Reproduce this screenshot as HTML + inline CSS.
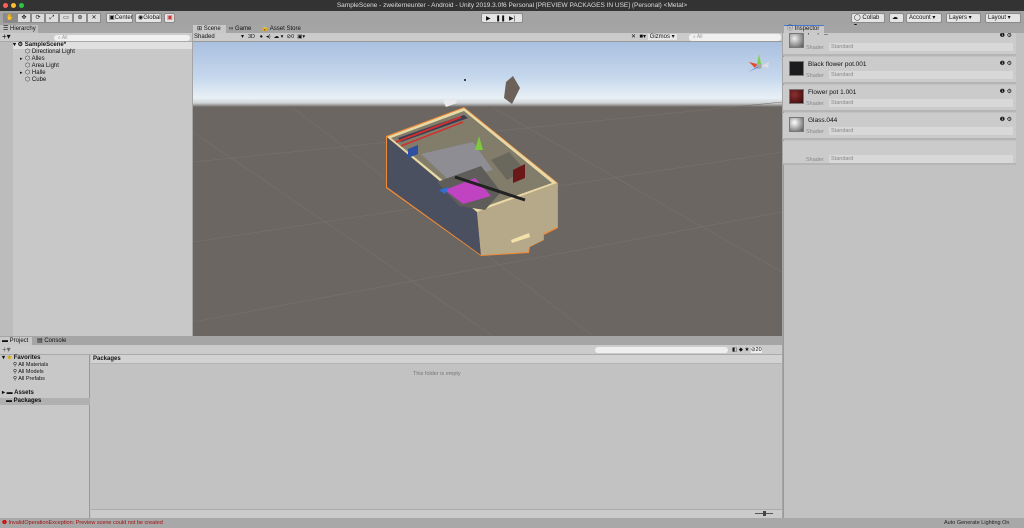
<!DOCTYPE html>
<html><head><style>
*{margin:0;padding:0;box-sizing:border-box}
body{width:1024px;height:528px;overflow:hidden;font-family:"Liberation Sans",sans-serif;font-size:6px;color:#111;background:#a5a5a5;position:relative}
.a{position:absolute}
.btn{position:absolute;background:#e4e4e4;border:1px solid #8a8a8a;border-radius:2px;height:10px;top:13px;font-size:6px;line-height:8px;padding:0 2px}
.tb{position:absolute;top:13px;height:10px;width:14px;background:#dcdcdc;border:1px solid #8a8a8a;font-size:6px;line-height:8px;text-align:center}
.tab{position:absolute;font-size:6px;line-height:8px}
.mat{position:absolute;left:783px;width:233px;height:27px;background:#cbcbcb;border-bottom:2px solid #b5b5b5}
.mat .th{position:absolute;left:6px;top:4px;width:15px;height:15px;border:1px solid #777}
.mat .nm{position:absolute;left:25px;top:4px;font-size:6.5px}
.mat .sh{position:absolute;left:23px;top:16px;color:#888;font-size:5.5px}
.mat .dd{position:absolute;left:46px;top:14px;width:184px;height:8px;background:#d8d8d8;color:#888;font-size:5.5px;padding-left:2px;line-height:8px}
.mat .ic{position:absolute;right:4px;top:3px;font-size:6px}
</style></head><body>
<div class="a" style="left:0;top:0;width:1024px;height:11px;background:#333;color:#ddd;font-size:6.5px;line-height:11px;text-align:center">SampleScene - zweiterneunter - Android - Unity 2019.3.0f6 Personal [PREVIEW PACKAGES IN USE] (Personal) &lt;Metal&gt;</div>
<div class="a" style="left:3px;top:3px;width:5px;height:5px;border-radius:50%;background:#fe5f57"></div>
<div class="a" style="left:11px;top:3px;width:5px;height:5px;border-radius:50%;background:#febc2e"></div>
<div class="a" style="left:19px;top:3px;width:5px;height:5px;border-radius:50%;background:#28c840"></div>
<div class="a" style="left:0;top:11px;width:1024px;height:14px;background:#a3a3a3"></div>
<div class="tb" style="left:3px;background:#8a8a8a">✋</div>
<div class="tb" style="left:17px">✥</div>
<div class="tb" style="left:31px">⟳</div>
<div class="tb" style="left:45px">⤢</div>
<div class="tb" style="left:59px">▭</div>
<div class="tb" style="left:73px">⊛</div>
<div class="tb" style="left:87px">✕</div>
<div class="btn" style="left:106px;width:27px">&#9635;Center</div>
<div class="btn" style="left:135px;width:27px">&#9673;Global</div>
<div class="btn" style="left:164px;width:11px;color:#c33">&#9635;</div>
<div class="btn" style="left:481px;width:42px"></div>
<div class="a" style="left:486px;top:15px;font-size:6px">&#9654;&nbsp;&nbsp;&nbsp;&#10074;&#10074;&nbsp;&nbsp;&#9654;|</div>
<div class="btn" style="left:851px;width:34px">&#9711; Collab ▾</div>
<div class="btn" style="left:889px;width:15px">☁</div>
<div class="btn" style="left:906px;width:36px">Account ▾</div>
<div class="btn" style="left:946px;width:35px">Layers ▾</div>
<div class="btn" style="left:985px;width:36px">Layout ▾</div>
<div class="a" style="left:0;top:25px;width:192px;height:311px;background:#c8c8c8"></div>
<div class="a" style="left:0;top:25px;width:192px;height:8px;background:#a5a5a5"></div>
<div class="a" style="left:0;top:25px;width:38px;height:8px;background:#c0c0c0"></div>
<div class="tab" style="left:3px;top:25px">☰ Hierarchy</div>
<div class="a" style="left:0;top:33px;width:192px;height:9px;background:#cbcbcb;border-bottom:1px solid #aaa"></div>
<div class="a" style="left:2px;top:33px;font-size:8px;line-height:8px">+▾</div>
<div class="a" style="left:54px;top:35px;width:136px;height:6px;background:#f0f0f0;border-radius:3px;color:#999;font-size:5px;padding-left:4px;line-height:6px">⌕ All</div>
<div class="a" style="left:0;top:42px;width:192px;height:7px;background:#e0e0e0"></div>
<div class="a" style="left:0;top:42px;width:13px;height:294px;background:#bcbcbc"></div>
<div class="a" style="left:13px;top:42px;line-height:7px;font-size:6px"><b>▾ ⚙ SampleScene*</b></div>
<div class="a" style="left:25px;top:49px;line-height:7px;font-size:6px">⬡ Directional Light<br>⬡ Alles<br>⬡ Area Light<br>⬡ Halle<br>⬡ Cube</div>
<div class="a" style="left:20px;top:56px;font-size:5px;line-height:7px">▸<br><br>▸</div>
<div class="a" style="left:193px;top:25px;width:589px;height:8px;background:#a5a5a5"></div>
<div class="a" style="left:193px;top:25px;width:33px;height:8px;background:#c8c8c8"></div>
<div class="tab" style="left:197px;top:25px">⊞ Scene</div>
<div class="tab" style="left:229px;top:25px">∞ Game</div>
<div class="tab" style="left:261px;top:25px">🔒 Asset Store</div>
<div class="a" style="left:193px;top:33px;width:589px;height:9px;background:#cbcbcb;border-bottom:1px solid #999"></div>
<div class="a" style="left:194px;top:33px;font-size:6px;line-height:9px;width:50px">Shaded<span style="float:right">▾</span></div>
<div class="a" style="left:248px;top:33px;font-size:5.5px;line-height:9px">3D &nbsp; &#9679; &nbsp;◂) &nbsp;☁ ▾ &nbsp;⊘0 &nbsp;▣▾</div>
<div class="a" style="left:631px;top:33px;font-size:6px;line-height:9px">✕ &nbsp;■▾ <span style="background:#e6e6e6;padding:0 2px">Gizmos ▾</span></div>
<div class="a" style="left:689px;top:34px;width:92px;height:7px;background:#f0f0f0;border-radius:3px;color:#999;font-size:5px;padding-left:4px;line-height:7px">⌕ All</div>
<div class="a" style="left:193px;top:42px;width:589px;height:294px;background:linear-gradient(#a9c0e0 0px,#c5d7ec 35px,#e8f0f6 56px,#d0d4d6 61px,#6b6661 65px,#6b6661 100%)"></div>
<svg class="a" style="left:193px;top:42px" width="589" height="294">
<g stroke="#77726d" stroke-width="0.6" fill="none"><path d="M0 120 L589 60 M0 200 L589 110 M0 280 L589 170 M100 66 L400 294 M300 66 L589 230 M0 90 L300 294"/></g>
<polygon points="320,34 327,46 319,62 311,56 313,40" fill="#6c6158"/>
<polygon points="250,59 261,55 264,61 253,65" fill="#e8e8ee"/>
<circle cx="272" cy="38" r="1" fill="#111"/>
<polygon points="193,94 271,65 365,141 365,186 351,193 351,198 337,205 336,211 288,214 193,146" fill="#f08a35"/>
<polygon points="194,95 284,170 288,213 194,145" fill="#4b5060"/>
<polygon points="284,170 364,141 364,185 350,192 350,198 336,205 335,210 288,213" fill="#b5a98a"/>
<polygon points="194,95 271,66 364,141 284,170" fill="#e6d9a8"/>
<polygon points="198,96 271,69 359,141 285,167" fill="#827c6a"/>
<polygon points="205,96 271,73 275,76 208,100" fill="#3c3c52"/>
<line x1="203" y1="100" x2="268" y2="75" stroke="#d03030" stroke-width="2"/>
<line x1="208" y1="104" x2="270" y2="80" stroke="#d03030" stroke-width="1.5"/>
<polygon points="228,112 280,100 300,128 258,140" fill="#8d8d93"/>
<polygon points="244,140 288,124 308,150 292,168 266,164" fill="#5f5d5a"/>
<polygon points="252,148 282,136 298,154 270,162" fill="#c043c2"/>
<line x1="262" y1="135" x2="332" y2="158" stroke="#222" stroke-width="3"/>
<polygon points="298,118 316,110 332,128 314,138" fill="#6a675d"/>
<polygon points="282,108 286,94 290,108" fill="#7ec83f"/>
<polygon points="320,128 332,122 332,136 320,141" fill="#6a1818"/>
<polygon points="246,148 256,145 252,152" fill="#2f6ed8"/>
<polygon points="215,107 225,103 225,112 215,116" fill="#2f4fa0"/>
<polygon points="318,198 336,191 337,195 319,201" fill="#f3e2a8"/>
</svg>
<svg class="a" style="left:745px;top:52px" width="28" height="26">
<circle cx="14" cy="14" r="3" fill="#aaa"/><polygon points="12,12 16,12 14,2" fill="#7bd045"/><polygon points="12,12 10,16 4,10" fill="#e64a2e"/><polygon points="12,16 14,14 3,20" fill="#3a6de8"/><polygon points="16,14 24,10 23,16" fill="#ddd"/></svg>
<div class="a" style="left:783px;top:25px;width:241px;height:493px;background:#c2c2c2;border-left:1px solid #999"></div>
<div class="mat" style="top:29px"><div class="th" style="background:radial-gradient(circle at 35% 35%,#eee,#555)"></div><div class="nm" style="top:-1px">props_hall.002</div><div class="sh">Shader</div><div class="dd">Standard</div><div class="ic">❶ ⚙</div></div>
<div class="a" style="left:783px;top:25px;width:241px;height:8px;background:#a5a5a5"></div>
<div class="a" style="left:784px;top:25px;width:40px;height:8px;background:#c8c8c8;border-top:1px solid #4a7ad0"></div>
<div class="tab" style="left:787px;top:25px">ⓘ Inspector</div>
<div class="mat" style="top:57px"><div class="th" style="background:#1c1c1e"></div><div class="nm">Black flower pot.001</div><div class="sh">Shader</div><div class="dd">Standard</div><div class="ic">❶ ⚙</div></div>
<div class="mat" style="top:85px"><div class="th" style="background:radial-gradient(circle at 35% 35%,#8a3030,#3a0a0a)"></div><div class="nm">Flower pot 1.001</div><div class="sh">Shader</div><div class="dd">Standard</div><div class="ic">❶ ⚙</div></div>
<div class="mat" style="top:113px"><div class="th" style="background:radial-gradient(circle at 35% 35%,#fff,#555)"></div><div class="nm">Glass.044</div><div class="sh">Shader</div><div class="dd">Standard</div><div class="ic">❶ ⚙</div></div>
<div class="mat" style="top:141px;height:24px"><div class="sh">Shader</div><div class="dd">Standard</div></div>
<div class="a" style="left:0;top:337px;width:782px;height:181px;background:#c2c2c2"></div>
<div class="a" style="left:0;top:337px;width:782px;height:8px;background:#a5a5a5"></div>
<div class="a" style="left:0;top:337px;width:32px;height:8px;background:#c8c8c8"></div>
<div class="tab" style="left:2px;top:337px">▬ Project</div>
<div class="tab" style="left:37px;top:337px">▤ Console</div>
<div class="a" style="left:0;top:345px;width:782px;height:10px;background:#cbcbcb;border-bottom:1px solid #aaa"></div>
<div class="a" style="left:2px;top:345px;font-size:8px;line-height:9px;color:#666">+▾</div>
<div class="a" style="left:595px;top:347px;width:133px;height:6px;background:#eee;border-radius:3px"></div>
<div class="a" style="left:732px;top:345px;font-size:5.5px;line-height:10px">◧ ◆ ★ <span style="background:#eee">⊘20</span></div>
<div class="a" style="left:0;top:355px;width:90px;height:163px;background:#c8c8c8;border-right:1px solid #999"></div>
<div class="a" style="left:2px;top:355px;font-size:6px;line-height:7px"><b>▾ <span style="color:#d9a400">★</span> Favorites</b></div>
<div class="a" style="left:13px;top:362px;font-size:5.5px;line-height:7px">⚲ All Materials<br>⚲ All Models<br>⚲ All Prefabs</div>
<div class="a" style="left:2px;top:390px;font-size:6px;line-height:7px"><b>▸ ▬ Assets</b></div>
<div class="a" style="left:0;top:398px;width:90px;height:7px;background:#b0b0b0"></div>
<div class="a" style="left:6px;top:398px;font-size:6px;line-height:7px"><b>▬ Packages</b></div>
<div class="a" style="left:91px;top:355px;width:691px;height:9px;background:#d2d2d2;border-bottom:1px solid #b4b4b4;font-size:6px;line-height:9px;padding-left:2px"><b>Packages</b></div>
<div class="a" style="left:91px;top:509px;width:691px;height:9px;background:#cbcbcb;border-top:1px solid #aaa"></div>
<div class="a" style="left:755px;top:513px;width:18px;height:1px;background:#555"></div>
<div class="a" style="left:763px;top:511px;width:3px;height:5px;background:#444"></div>
<div class="a" style="left:413px;top:371px;color:#777;font-size:5.5px">This folder is empty</div>
<div class="a" style="left:0;top:518px;width:1024px;height:10px;background:#a8a8a8"></div>
<div class="a" style="left:2px;top:518px;font-size:5.5px;line-height:10px;color:#a01010"><b style="color:#d00">❶</b> InvalidOperationException: Preview scene could not be created</div>
<div class="a" style="left:944px;top:518px;font-size:5.5px;line-height:10px;color:#222">Auto Generate Lighting On</div>
</body></html>
